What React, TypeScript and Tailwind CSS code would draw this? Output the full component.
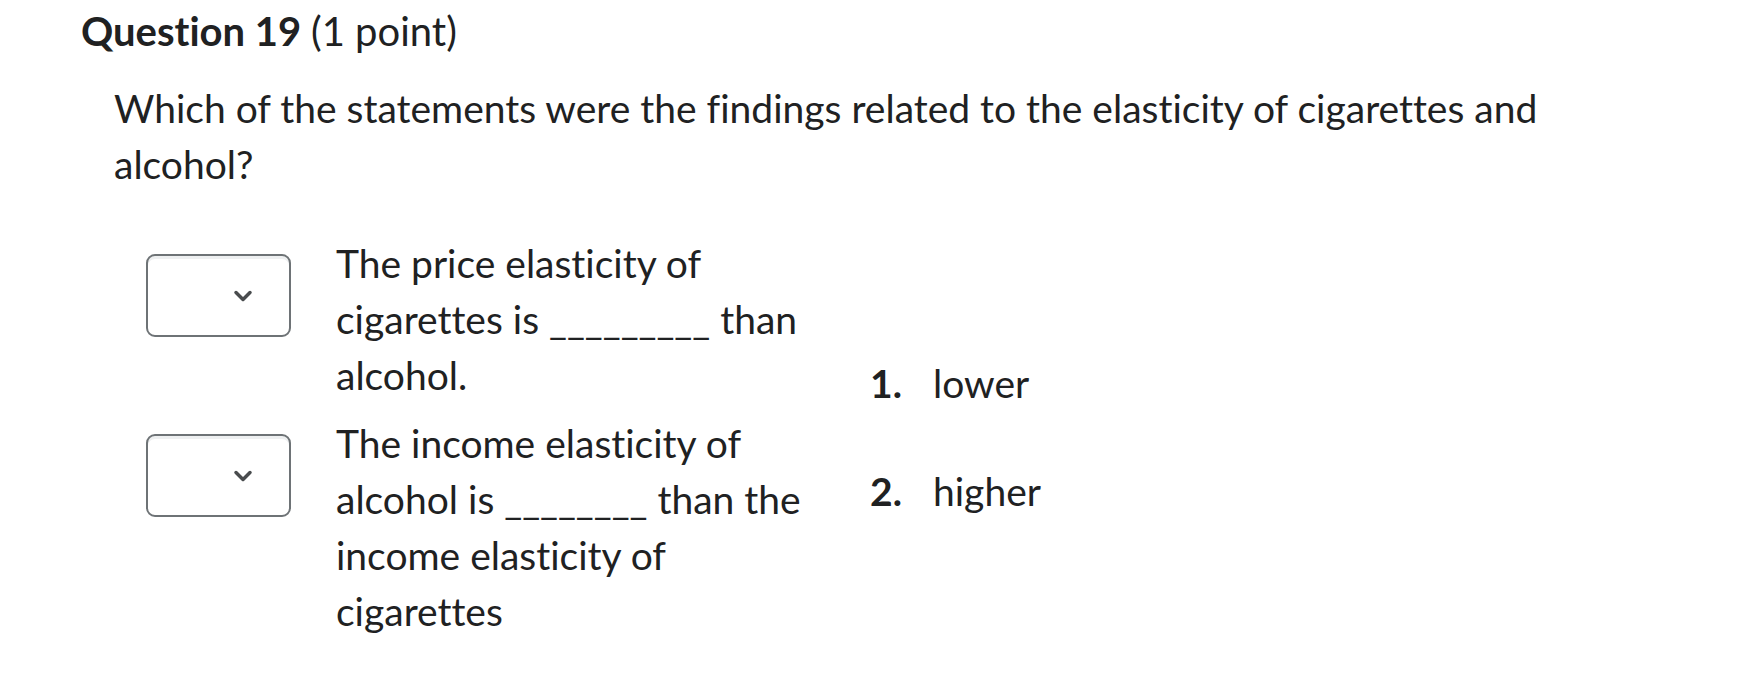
import { ChevronDown } from 'lucide-react';

const statements = [
  { id: 'q19a', parts: ['The price elasticity of cigarettes is ', '_________', ' than alcohol.'] },
  { id: 'q19b', parts: ['The income elasticity of alcohol is ', '________', ' than the income elasticity of cigarettes'] },
];

const choices = ['lower', 'higher'];

function MatchSelect() {
  return (
    <div className="w-[145px] h-[83px] shrink-0 mt-[19px] rounded-[9px] border-2 border-[#6e7376] bg-white shadow-[inset_0_3px_0_0_#eef0f1] flex items-center justify-end pr-[32px]">
      <ChevronDown size={28} strokeWidth={3} className="text-[#494c4e]" />
    </div>
  );
}

export default function App() {
  return (
    <div className="bg-white w-[1764px] h-[678px] text-[#202122] font-['Lato',sans-serif] [font-variant-ligatures:none]">
      <div className="pl-[81px] pt-[8px]">
        <h2 className="text-[40px] leading-[46px] font-bold">
          Question 19 <span className="font-normal">(1 point)</span>
        </h2>

        <div className="pl-[33px] mt-[26px] text-[39px] leading-[56px]">
          <p className="w-[1460px]">
            Which of the statements were the findings related to the elasticity of cigarettes and alcohol?
          </p>

          <div className="flex items-center mt-[43px] pl-[32px]">
            <div className="flex flex-col gap-[12px]">
              {statements.map((s) => (
                <div key={s.id} className="flex gap-[45px]">
                  <MatchSelect />
                  <p className="w-[480px]">{s.parts.join('')}</p>
                </div>
              ))}
            </div>

            <ol className="ml-[54px] flex flex-col gap-[52px]">
              {choices.map((c, i) => (
                <li key={c} className="flex">
                  <span className="font-bold w-[63px]">{i + 1}.</span>
                  <span>{c}</span>
                </li>
              ))}
            </ol>
          </div>
        </div>
      </div>
    </div>
  );
}
